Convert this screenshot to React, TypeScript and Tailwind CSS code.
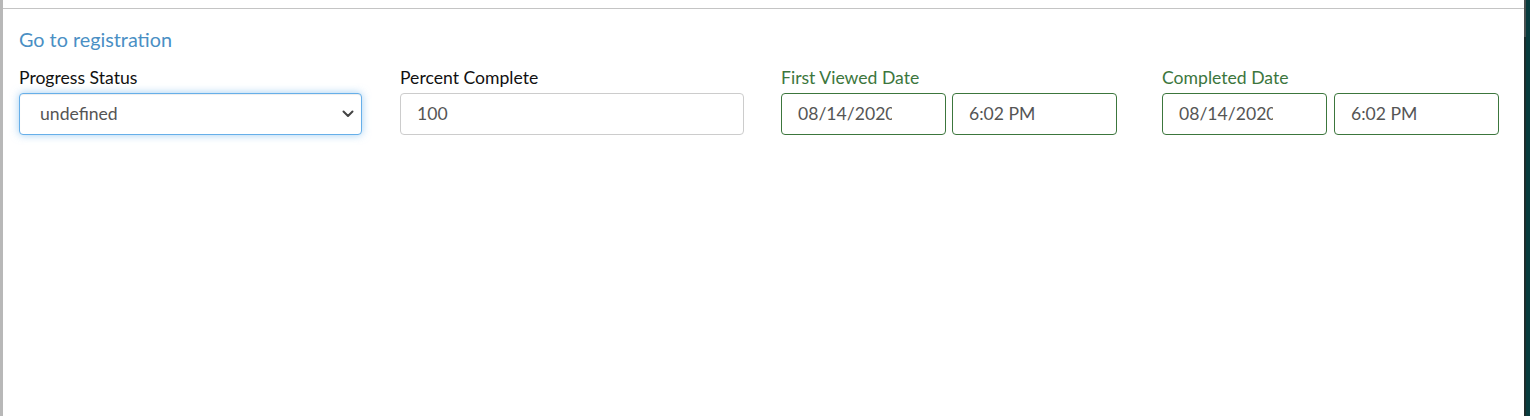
import React from "react";

const font = { fontFamily: "Lato, 'Open Sans', sans-serif" };

function Box({ children, green, w }: { children: React.ReactNode; green?: boolean; w: string }) {
  return (
    <div
      className={
        "h-[42px] rounded-[4px] border bg-white flex items-center pl-[16px] text-[17.6px] text-[#555555] overflow-hidden whitespace-nowrap " +
        (green ? "border-[#3c763d] " : "border-[#cccccc] ") +
        w
      }
    >
      {children}
    </div>
  );
}

export default function App() {
  return (
    <div className="flex h-[416px] w-[1530px] bg-white overflow-hidden" style={font}>
      <div className="w-[3px] shrink-0 bg-[#b8b8b8]" />
      <div className="flex-1 flex flex-col">
        <div className="h-[8px] shrink-0" />
        <div className="flex-1 border-t border-[#c4c4c4] pl-[16px] pt-[19px]">
          <a className="block text-[19.8px] leading-[22px] text-[#4a8fc4] w-fit cursor-pointer">Go to registration</a>
          <div className="flex gap-[38px] mt-[18px]">
            <div className="w-[343px] shrink-0">
              <div className="text-[17.6px] leading-[20px] text-[#111111] mb-[5px]">Progress Status</div>
              <div className="h-[42px] rounded-[4px] border border-[#66afe9] bg-white flex items-center justify-between pl-[20px] pr-[6px] text-[17.6px] text-[#555555] shadow-[inset_0_1px_1px_rgba(0,0,0,0.075),0_0_8px_rgba(102,175,233,0.6)]">
                <span>undefined</span>
                <svg width="12" height="8" viewBox="0 0 12 8" className="mr-[1px]">
                  <path d="M1.5 1.5 L6 6 L10.5 1.5" fill="none" stroke="#444444" strokeWidth="2" strokeLinecap="round" strokeLinejoin="round" />
                </svg>
              </div>
            </div>
            <div className="w-[343px] shrink-0">
              <div className="text-[17.6px] leading-[20px] text-[#111111] mb-[5px]">Percent Complete</div>
              <Box w="w-[344px]">100</Box>
            </div>
            <div className="w-[343px] shrink-0">
              <div className="text-[17.6px] leading-[20px] text-[#3c763d] mb-[5px]">First Viewed Date</div>
              <div className="flex gap-[6px]">
                <Box green w="w-[165px]">
                  <span className="block w-[94px] overflow-hidden">08/14/2020</span>
                </Box>
                <Box green w="w-[165px]">6:02 PM</Box>
              </div>
            </div>
            <div className="w-[343px] shrink-0">
              <div className="text-[17.6px] leading-[20px] text-[#3c763d] mb-[5px]">Completed Date</div>
              <div className="flex gap-[7px]">
                <Box green w="w-[165px]">
                  <span className="block w-[94px] overflow-hidden">08/14/2020</span>
                </Box>
                <Box green w="w-[165px]">6:02 PM</Box>
              </div>
            </div>
          </div>
        </div>
      </div>
      <div className="w-[2px] shrink-0 flex flex-col">
        <div className="h-[37px] bg-[#4a5050]" />
        <div className="flex-1 bg-[#1e2c2c]" />
      </div>
      <div className="w-[4px] shrink-0 bg-[#083c3e]" />
    </div>
  );
}
